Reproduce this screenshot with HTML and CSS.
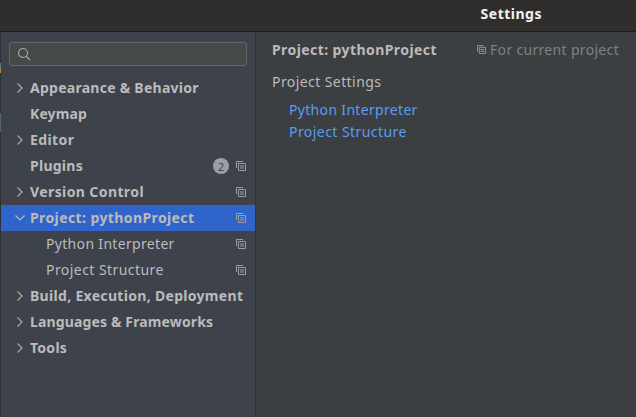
FILE: index.html
```html
<!DOCTYPE html>
<html lang="en">
<head>
<meta charset="utf-8">
<title>Settings</title>
<link rel="stylesheet" href="styles.css">
</head>
<body>
<svg class="defs" width="0" height="0" aria-hidden="true">
  <symbol id="copy" viewBox="0 0 10 10">
    <path d="M0.5 7V0.5H7" fill="none" stroke="currentColor"/>
    <path d="M2.5 2.5H9.5V9.5H2.5Z M4 5H8 M4 7H8" fill="none" stroke="currentColor"/>
  </symbol>
  <symbol id="right" viewBox="0 0 8 12"><path d="M1.5 1.5L6 6L1.5 10.5" fill="none" stroke="currentColor" stroke-width="1.2"/></symbol>
  <symbol id="down" viewBox="0 0 12 8"><path d="M1.5 1.5L6 6L10.5 1.5" fill="none" stroke="currentColor" stroke-width="1.2"/></symbol>
</svg>
<header class="titlebar"><span class="title">Settings</span></header>
<div class="window">
  <div class="edge"></div>
  <nav class="sidebar">
    <div class="search">
      <svg class="search-icon" viewBox="0 0 14 14"><circle cx="6" cy="6" r="4.5" fill="none" stroke="currentColor" stroke-width="1.1"/><path d="M9.4 9.4L13 13" fill="none" stroke="currentColor" stroke-width="1.2"/></svg>
    </div>
    <ul class="tree">
      <li class="row bold"><svg class="arrow"><use href="#right"/></svg><span class="label">Appearance &amp; Behavior</span></li>
      <li class="row bold"><span class="arrow"></span><span class="label sp-tight">Keymap</span></li>
      <li class="row bold"><svg class="arrow"><use href="#right"/></svg><span class="label sp-wide">Editor</span></li>
      <li class="row bold"><span class="arrow"></span><span class="label">Plugins</span><span class="badge">2</span><svg class="copy"><use href="#copy"/></svg></li>
      <li class="row bold"><svg class="arrow"><use href="#right"/></svg><span class="label sp-wide">Version Control</span><svg class="copy"><use href="#copy"/></svg></li>
      <li class="row bold selected"><svg class="arrow-down"><use href="#down"/></svg><span class="label sp-wide">Project: pythonProject</span><svg class="copy"><use href="#copy"/></svg></li>
      <li class="row child"><span class="label">Python Interpreter</span><svg class="copy"><use href="#copy"/></svg></li>
      <li class="row child"><span class="label sp-regular-wide">Project Structure</span><svg class="copy"><use href="#copy"/></svg></li>
      <li class="row bold"><svg class="arrow"><use href="#right"/></svg><span class="label sp-mid">Build, Execution, Deployment</span></li>
      <li class="row bold"><svg class="arrow"><use href="#right"/></svg><span class="label sp-narrow">Languages &amp; Frameworks</span></li>
      <li class="row bold"><svg class="arrow"><use href="#right"/></svg><span class="label">Tools</span></li>
    </ul>
  </nav>
  <main class="content">
    <div class="content-head">
      <span class="crumb">Project: pythonProject</span>
      <span class="scope"><svg class="copy-small"><use href="#copy"/></svg>For current project</span>
    </div>
    <div class="section">Project Settings</div>
    <a class="link first">Python Interpreter</a>
    <a class="link sp-regular-wide">Project Structure</a>
  </main>
</div>
</body>
</html>
```
FILE: styles.css
```css
* { box-sizing: border-box; }
html, body { margin: 0; height: 100%; }
body {
  width: 636px; height: 417px; overflow: hidden;
  background: #3c3f41; color: #bbbbbb;
  font-family: "Noto Sans", "Open Sans", sans-serif; font-size: 14px;
  letter-spacing: 0.32px;
  display: flex; flex-direction: column;
}
.defs { position: absolute; }
.titlebar {
  height: 32px; flex: none; background: #302e2d; border-bottom: 1px solid #1d1c1c;
  display: flex; justify-content: flex-end; padding-right: 94px; padding-top: 4px;
}
.title { color: #f2f2f2; font-weight: 700; font-size: 14px; line-height: 20px; letter-spacing: 0.5px; }
.window { flex: 1; display: flex; min-height: 0; }
.edge {
  width: 1px; flex: none;
  background: linear-gradient(#2f3032 0 31px, #4a7f8c 31px 36px, #b58a2a 36px 41px, #2f3032 41px 81px, #54656b 81px 100px, #2f3032 100px);
}
.sidebar {
  width: 255px; flex: none; background: #3e424b; border-right: 1px solid #323437;
  padding-top: 10px;
}
.search {
  margin-left: 8px; width: 238px; height: 24px; background: #45494a;
  border: 1px solid #646464; border-radius: 3px; display: flex; align-items: center; padding-left: 7px;
}
.search-icon { width: 14px; height: 14px; color: #adadad; }
.tree { list-style: none; margin: 9px 0 0; padding: 0; }
.row { height: 26px; display: flex; align-items: center; padding-right: 9px; color: #bbbbbb; }
.bold { font-weight: 700; letter-spacing: 0.26px; }
.sp-tight { letter-spacing: 0.1px; }
.sp-wide { letter-spacing: 0.4px; }
.sp-mid { letter-spacing: 0.31px; }
.sp-narrow { letter-spacing: 0.14px; }
.sp-regular-wide { letter-spacing: 0.44px; }
.arrow { width: 8px; height: 12px; margin-left: 15px; margin-right: 6px; margin-bottom: 1px; color: #a8a8a8; flex: none; }
.arrow-down { width: 12px; height: 8px; margin-left: 13px; margin-right: 4px; margin-bottom: 1px; color: #b4b8c0; flex: none; }
.child .label { margin-left: 45px; }
.label { flex: 1; white-space: nowrap; margin-bottom: 2px; }
.selected { background: #2f65ca; }
.copy { width: 10px; height: 10px; color: #9a9da1; flex: none; margin-left: 7px; margin-bottom: 1px; }
.badge {
  width: 16px; height: 16px; border-radius: 50%; background: #9ca0a4; color: #3e424b;
  font-size: 11px; font-weight: 400; display: flex; align-items: center; justify-content: center;
}
.content { flex: 1; padding: 8px 17px 0 16px; }
.content-head { display: flex; justify-content: space-between; align-items: center; height: 19px; }
.crumb { font-weight: 700; letter-spacing: 0.42px; }
.scope { color: #808080; display: flex; align-items: center; }
.copy-small { width: 9px; height: 9px; margin-right: 4px; color: #9a9da1; }
.section { margin-top: 13px; height: 19px; line-height: 19px; letter-spacing: 0.42px; }
.link { display: block; margin-left: 17px; color: #589df6; height: 22px; line-height: 22px; }
.first { margin-top: 8px; }
```
